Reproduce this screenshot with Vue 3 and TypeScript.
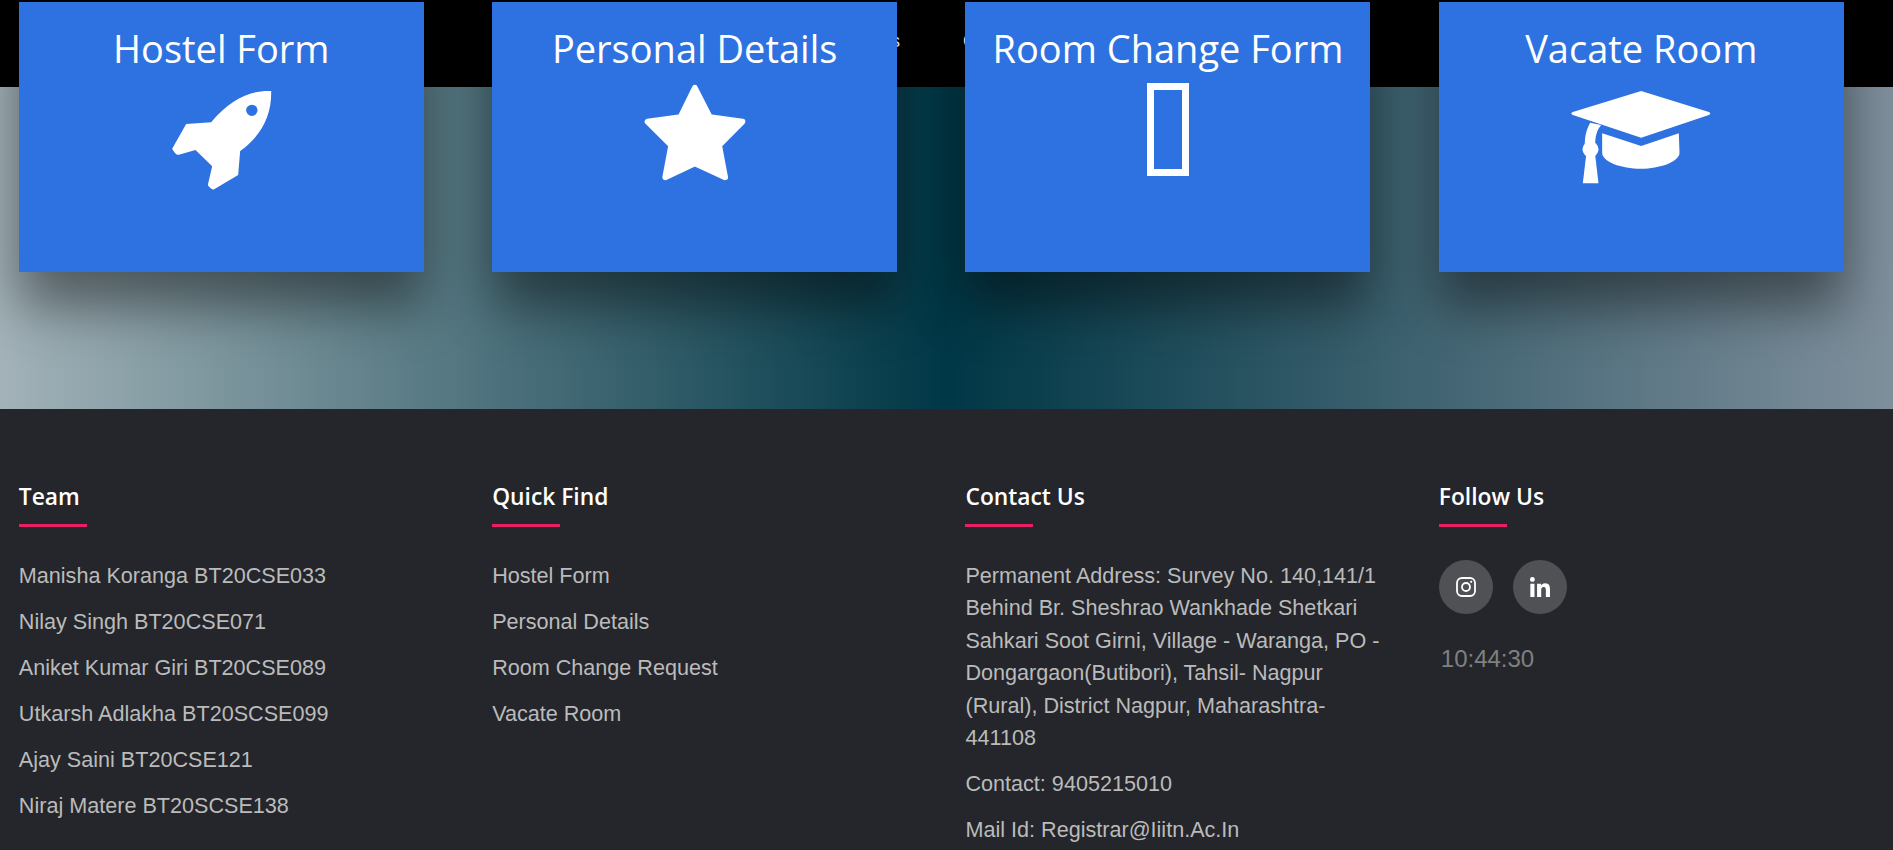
<template>
  <div class="page">
    <nav class="topbar">
      <a class="nav-link nav-left">s</a>
      <a class="nav-link">C</a>
    </nav>

    <section class="hero">
      <div class="cards">
        <div v-for="card in cards" :key="card.title" class="card">
          <h2 class="card-title">{{ card.title }}</h2>
          <div v-if="card.icon === 'none'" class="tofu-wrap"><span class="tofu"></span></div>
          <svg v-else class="card-icon" :viewBox="card.box" fill="#fff">
            <template v-if="card.icon === 'rocket'">
              <path d="M395 63C397 130 370 195 302 243L296 315L224 358Q215 360 205 345L218 289L168 240L118 254Q108 256 98 236L140 162L215 157C270 90 330 60 395 63Z" />
              <circle cx="337" cy="121" r="17" fill="#2d72e0" />
            </template>
            <polygon
              v-else-if="card.icon === 'star'"
              points="223,53 268,141 366,155 296,226 314,322 223,280 134,322 152,226 81,155 180,141"
              stroke="#fff"
              stroke-width="17"
              stroke-linejoin="round" />
            <template v-else>
              <path d="M275 63L478 126Q487 130 478 135L275 203L70 135Q61 130 70 126Z" />
              <path d="M158 190L275 228L388 190L390 248C390 275 330 296 275 296C215 296 158 275 158 248Z" />
              <path d="M122 158C110 180 106 200 106 225L137 225C137 200 142 180 155 165Z" />
              <circle cx="123" cy="238" r="24" />
              <path d="M110 255L100 340L147 340L137 255Z" />
            </template>
          </svg>
        </div>
      </div>
    </section>

    <footer class="footer">
      <div class="col">
        <h4 class="col-title">Team</h4>
        <ul class="col-list">
          <li v-for="m in team" :key="m">{{ m }}</li>
        </ul>
      </div>
      <div class="col">
        <h4 class="col-title">Quick Find</h4>
        <ul class="col-list">
          <li v-for="l in links" :key="l">{{ l }}</li>
        </ul>
      </div>
      <div class="col">
        <h4 class="col-title">Contact Us</h4>
        <ul class="col-list">
          <li v-for="c in contact" :key="c">{{ c }}</li>
        </ul>
      </div>
      <div class="col">
        <h4 class="col-title">Follow Us</h4>
        <div class="socials">
          <a class="social">
            <svg class="ig" viewBox="0 0 20 20" fill="none" stroke="#fff" stroke-width="1.8">
              <rect x="1" y="1" width="18" height="18" rx="5" />
              <circle cx="10" cy="10" r="4" />
              <circle cx="15.2" cy="4.8" r="1.1" fill="#fff" stroke="none" />
            </svg>
          </a>
          <a class="social">
            <svg class="in" viewBox="0 0 448 448" fill="#fff">
              <path d="M100.28 448H7.4V148.9h92.88zM53.79 108.1C24.09 108.1 0 83.5 0 53.8a53.79 53.79 0 0 1 107.58 0c0 29.7-24.1 54.3-53.79 54.3zM447.9 448h-92.68V302.4c0-34.7-.7-79.2-48.29-79.2-48.29 0-55.69 37.7-55.69 76.7V448h-92.78V148.9h89.08v40.8h1.3c12.4-23.5 42.69-48.3 87.88-48.3 94 0 111.28 61.9 111.28 142.3V448z" />
            </svg>
          </a>
        </div>
        <div class="clock">{{ time }}</div>
      </div>
    </footer>
  </div>
</template>

<script setup lang="ts">
interface Card {
  title: string
  icon: "rocket" | "star" | "none" | "cap"
  box: string
}

const cards: Card[] = [
  { title: "Hostel Form", icon: "rocket", box: "34.5 30 420 330" },
  { title: "Personal Details", icon: "star", box: "13.5 30 420 330" },
  { title: "Room Change Form", icon: "none", box: "" },
  { title: "Vacate Room", icon: "cap", box: "64.5 30 420 330" }
]

const team = [
  "Manisha Koranga BT20CSE033",
  "Nilay Singh BT20CSE071",
  "Aniket Kumar Giri BT20CSE089",
  "Utkarsh Adlakha BT20SCSE099",
  "Ajay Saini BT20CSE121",
  "Niraj Matere BT20SCSE138"
]

const links = ["Hostel Form", "Personal Details", "Room Change Request", "Vacate Room"]

const contact = [
  "Permanent Address: Survey No. 140,141/1 Behind Br. Sheshrao Wankhade Shetkari Sahkari Soot Girni, Village - Waranga, PO - Dongargaon(Butibori), Tahsil- Nagpur (Rural), District Nagpur, Maharashtra-441108",
  "Contact: 9405215010",
  "Mail Id: Registrar@Iiitn.Ac.In"
]

const time = "10:44:30"
</script>

<style scoped>
.page {
  font-family: "Liberation Sans", Arial, sans-serif;
}

.topbar {
  display: flex;
  gap: 63px;
  height: 87px;
  padding-top: 31px;
  box-sizing: border-box;
  background: #000;
}

.nav-link {
  color: #fff;
  font-size: 18px;
  line-height: 21px;
}

/* only slivers of the nav words show past the cards */
.nav-left {
  margin-left: 891px;
}

.hero {
  height: 322px;
  background: linear-gradient(to right, #a2b2b8, #003746 50%, #7f8f9c);
}

.cards {
  display: grid;
  grid-template-columns: repeat(4, 405px);
  column-gap: 68.33px;
  padding-left: 18.8px;
  transform: translateY(-85px);
}

.card {
  height: 270px;
  padding-top: 22px;
  box-sizing: border-box;
  background: #2d72e0;
  box-shadow: 0 35px 50px rgba(0, 0, 0, 0.45);
  color: #fff;
  text-align: center;
}

.card-title {
  margin: 0 0 8px;
  font-family: "Open Sans", sans-serif;
  font-size: 38px;
  font-weight: 400;
  line-height: 48px;
  white-space: nowrap;
}

.card-icon {
  display: block;
  width: 140px;
  height: 110px;
  margin: 0 auto;
}

.tofu-wrap {
  display: flex;
  justify-content: center;
}

.tofu {
  width: 42px;
  height: 93px;
  margin-top: 3px;
  box-sizing: border-box;
  border: 7px solid #fff;
}

.footer {
  display: grid;
  grid-template-columns: repeat(4, 425px);
  column-gap: 48.33px;
  padding: 73px 0 0 18.8px;
  height: 441px;
  box-sizing: border-box;
  overflow: hidden;
  background: #24262b;
}

.col-title {
  position: relative;
  margin: 0 0 32.5px;
  padding-bottom: 15px;
  font-family: "Open Sans", sans-serif;
  font-size: 22.8px;
  font-weight: 600;
  line-height: 30px;
  color: #fff;
}

.col-title::after {
  content: "";
  position: absolute;
  left: 0;
  bottom: 0;
  width: 68px;
  height: 3px;
  background: #e91e63;
}

.col-list {
  margin: 0;
  padding: 0;
  list-style: none;
}

.col-list li {
  margin-bottom: 13.5px;
  font-size: 21.6px;
  line-height: 32.5px;
  color: #bbb;
}

.socials {
  display: flex;
  gap: 20px;
  margin-top: 1px;
}

.social {
  display: flex;
  align-items: center;
  justify-content: center;
  width: 54px;
  height: 54px;
  border-radius: 50%;
  background: rgba(255, 255, 255, 0.2);
}

.ig {
  width: 20px;
  height: 20px;
}

.in {
  width: 20px;
  height: 20px;
}

.clock {
  margin: 31px 0 0 2px;
  font-size: 24px;
  line-height: 28px;
  color: #808080;
}
</style>
